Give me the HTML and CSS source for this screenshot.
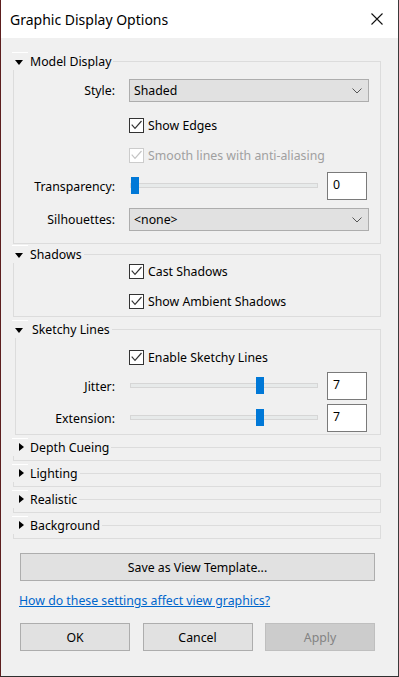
FILE: index.html
```html
<!DOCTYPE html>
<html lang="en">
<head>
    <meta charset="UTF-8">
    <meta name="viewport" content="width=device-width, initial-scale=1.0">
    <title>Graphic Display Options</title>
    <link rel="stylesheet" href="styles.css">
</head>
<body>
    <div class="dialog">
        <div class="titlebar">
            <span class="title">Graphic Display Options</span>
            <svg class="close" width="12" height="12" viewBox="0 0 12 12">
                <path d="M0.5 0.5 L11.5 11.5 M11.5 0.5 L0.5 11.5" stroke="#111" stroke-width="1.1" fill="none"/>
            </svg>
        </div>

        <div class="content">
            <!-- Model Display -->
            <section class="group">
                <div class="group-head">
                    <span class="toggle"><span class="tri-down"></span></span>
                    <span class="group-title">Model Display</span>
                    <span class="group-rule"></span>
                </div>
                <div class="group-body model-body">
                    <div class="row row-style">
                        <span class="lbl">Style:</span>
                        <div class="select">
                            <span>Shaded</span>
                            <svg class="chevron" width="10" height="6" viewBox="0 0 10 6"><path d="M0.5 0.5 L5 5 L9.5 0.5" stroke="#555" fill="none"/></svg>
                        </div>
                    </div>
                    <div class="row row-edges">
                        <span></span>
                        <label class="check">
                            <span class="box"><svg width="13" height="13" viewBox="0 0 13 13"><polyline points="1.7,5.7 5,9.3 11.5,2" stroke="#333" stroke-width="1.2" fill="none"/></svg></span>
                            Show Edges
                        </label>
                    </div>
                    <div class="row row-smooth">
                        <span></span>
                        <label class="check disabled">
                            <span class="box"><svg width="13" height="13" viewBox="0 0 13 13"><polyline points="1.7,5.7 5,9.3 11.5,2" stroke="#c4c4c4" stroke-width="1.2" fill="none"/></svg></span>
                            Smooth lines with anti-aliasing
                        </label>
                    </div>
                    <div class="row row-transp">
                        <span class="lbl">Transparency:</span>
                        <div class="slider-wrap">
                            <div class="slider"><span class="track"></span><span class="thumb" style="left: 2px"></span></div>
                            <div class="textbox">0</div>
                        </div>
                    </div>
                    <div class="row row-silh">
                        <span class="lbl">Silhouettes:</span>
                        <div class="select">
                            <span>&lt;none&gt;</span>
                            <svg class="chevron" width="10" height="6" viewBox="0 0 10 6"><path d="M0.5 0.5 L5 5 L9.5 0.5" stroke="#555" fill="none"/></svg>
                        </div>
                    </div>
                </div>
            </section>

            <!-- Shadows -->
            <section class="group group-shadows">
                <div class="group-head">
                    <span class="toggle"><span class="tri-down"></span></span>
                    <span class="group-title">Shadows</span>
                    <span class="group-rule"></span>
                </div>
                <div class="group-body shadows-body">
                    <div class="row row-cast">
                        <span></span>
                        <label class="check">
                            <span class="box"><svg width="13" height="13" viewBox="0 0 13 13"><polyline points="1.7,5.7 5,9.3 11.5,2" stroke="#333" stroke-width="1.2" fill="none"/></svg></span>
                            Cast Shadows
                        </label>
                    </div>
                    <div class="row row-ambient">
                        <span></span>
                        <label class="check">
                            <span class="box"><svg width="13" height="13" viewBox="0 0 13 13"><polyline points="1.7,5.7 5,9.3 11.5,2" stroke="#333" stroke-width="1.2" fill="none"/></svg></span>
                            Show Ambient Shadows
                        </label>
                    </div>
                </div>
            </section>

            <!-- Sketchy Lines -->
            <section class="group group-sketchy">
                <div class="group-head">
                    <span class="toggle"><span class="tri-down"></span></span>
                    <span class="group-title">Sketchy Lines</span>
                    <span class="group-rule"></span>
                </div>
                <div class="group-body sketchy-body">
                    <div class="row row-enable">
                        <span></span>
                        <label class="check">
                            <span class="box"><svg width="13" height="13" viewBox="0 0 13 13"><polyline points="1.7,5.7 5,9.3 11.5,2" stroke="#333" stroke-width="1.2" fill="none"/></svg></span>
                            Enable Sketchy Lines
                        </label>
                    </div>
                    <div class="row row-jitter">
                        <span class="lbl">Jitter:</span>
                        <div class="slider-wrap">
                            <div class="slider"><span class="track"></span><span class="thumb" style="left: 127px"></span></div>
                            <div class="textbox">7</div>
                        </div>
                    </div>
                    <div class="row row-ext">
                        <span class="lbl">Extension:</span>
                        <div class="slider-wrap">
                            <div class="slider"><span class="track"></span><span class="thumb" style="left: 127px"></span></div>
                            <div class="textbox">7</div>
                        </div>
                    </div>
                </div>
            </section>

            <!-- collapsed groups -->
            <section class="group group-collapsed">
                <div class="group-head">
                    <span class="toggle"><span class="tri-right"></span></span>
                    <span class="group-title">Depth Cueing</span>
                    <span class="group-rule"></span>
                </div>
                <div class="group-body"></div>
            </section>
            <section class="group group-collapsed">
                <div class="group-head">
                    <span class="toggle"><span class="tri-right"></span></span>
                    <span class="group-title">Lighting</span>
                    <span class="group-rule"></span>
                </div>
                <div class="group-body"></div>
            </section>
            <section class="group group-collapsed">
                <div class="group-head">
                    <span class="toggle"><span class="tri-right"></span></span>
                    <span class="group-title">Realistic</span>
                    <span class="group-rule"></span>
                </div>
                <div class="group-body"></div>
            </section>
            <section class="group group-collapsed">
                <div class="group-head">
                    <span class="toggle"><span class="tri-right"></span></span>
                    <span class="group-title">Background</span>
                    <span class="group-rule"></span>
                </div>
                <div class="group-body"></div>
            </section>

            <button class="btn btn-wide">Save as View Template...</button>
            <a class="help-link" href="#">How do these settings affect view graphics?</a>

            <div class="actions">
                <button class="btn">OK</button>
                <button class="btn">Cancel</button>
                <button class="btn btn-disabled">Apply</button>
            </div>
        </div>
    </div>
</body>
</html>
```

FILE: styles.css
```css
body {
    margin: 0;
    padding: 0;
    font-family: "Noto Sans", "Liberation Sans", sans-serif;
    font-size: 12.3px;
    color: #000;
    background-color: #2b2b2b;
}

.dialog {
    width: 399px;
    height: 677px;
    box-sizing: border-box;
    background-color: #f0f0f0;
    border-left: 1px solid #5c1e1e;
    border-right: 1px solid #3a3a3a;
    border-bottom: 1px solid #2f2f2f;
    display: flex;
    flex-direction: column;
}

/* title bar */
.titlebar {
    height: 38px;
    background-color: #fff;
    display: flex;
    align-items: center;
    justify-content: space-between;
    padding: 0 15px 0 9px;
}
.title {
    font-size: 14px;
}

.content {
    padding: 14px 17px 0 11px;
    display: flex;
    flex-direction: column;
}

/* collapsible groups */
.group {
    display: flex;
    flex-direction: column;
}
.group-shadows {
    margin-top: 1px;
}
.group-sketchy,
.group-collapsed {
    margin-top: 3px;
}
.group-head {
    height: 18px;
    display: flex;
    align-items: center;
}
.toggle {
    width: 16px;
    height: 17px;
    border-top: 1px solid #fff;
    position: relative;
}
.tri-down {
    position: absolute;
    left: 3px;
    top: 7px;
    border-left: 4.5px solid transparent;
    border-right: 4.5px solid transparent;
    border-top: 5px solid #000;
}
.tri-right {
    position: absolute;
    left: 7px;
    top: 4px;
    border-top: 4px solid transparent;
    border-bottom: 4px solid transparent;
    border-left: 5px solid #000;
}
.group-title {
    margin-left: 2px;
    padding-right: 2px;
}
.group-sketchy .group-title {
    margin-left: 4px;
}
.group-rule {
    flex: 1;
    align-self: stretch;
    margin-top: 9px;
    border-top: 1px solid #dcdcdc;
    border-right: 1px solid #dcdcdc;
}
.group-body {
    margin-left: 1px;
    height: 4px;
    border: 1px solid #dcdcdc;
    border-top: none;
}
.group-sketchy .group-body {
    margin-left: 3px;
}

.model-body,
.shadows-body,
.sketchy-body {
    height: auto;
    display: flex;
    flex-direction: column;
}
.model-body {
    padding: 9px 0 12px 0;
}
.shadows-body {
    padding: 1px 0 7px 0;
}
.sketchy-body {
    padding: 12px 0 2px 0;
}

.row {
    display: grid;
    grid-template-columns: 101px 240px;
    column-gap: 14px;
    align-items: center;
}
.group-sketchy .row {
    grid-template-columns: 99px 240px;
}
.row-edges { margin-top: 16px; }
.row-smooth { margin-top: 15px; }
.row-transp { margin-top: 9px; }
.row-silh { margin-top: 8px; }
.row-ambient { margin-top: 15px; }
.row-jitter { margin-top: 7px; }
.row-ext { margin-top: 4px; }

.lbl {
    text-align: right;
}

/* dropdown */
.select {
    height: 23px;
    box-sizing: border-box;
    background-color: #e1e1e1;
    border: 1px solid #adadad;
    display: flex;
    align-items: center;
    justify-content: space-between;
    padding: 0 6px 0 4px;
}

/* checkbox */
.check {
    display: flex;
    align-items: center;
    height: 15px;
}
.box {
    width: 15px;
    height: 15px;
    box-sizing: border-box;
    border: 1px solid #333;
    background-color: #fff;
    margin-right: 4px;
    display: flex;
}
.disabled {
    color: #a0a0a0;
}
.disabled .box {
    border-color: #cccccc;
}

/* slider + value box */
.slider-wrap {
    display: flex;
    align-items: center;
    gap: 8px;
}
.slider {
    width: 190px;
    height: 18px;
    position: relative;
}
.track {
    position: absolute;
    left: 1px;
    right: 1px;
    top: 6px;
    height: 3px;
    background-color: #e7eaea;
    border: 1px solid #d6d6d6;
}
.thumb {
    position: absolute;
    top: 0;
    width: 8px;
    height: 17px;
    background-color: #0078d7;
}
.textbox {
    width: 40px;
    height: 28px;
    box-sizing: border-box;
    background-color: #fff;
    border: 1px solid #7a7a7a;
    padding: 3px 5px;
}

/* buttons */
.btn {
    font-family: inherit;
    font-size: 12.3px;
    color: #000;
    height: 28px;
    box-sizing: border-box;
    background-color: #e1e1e1;
    border: 1px solid #adadad;
    padding: 0;
}
.btn-wide {
    margin: 14px 0 0 8px;
    width: 355px;
}
.help-link {
    margin: 12px 0 0 7px;
    line-height: 16px;
    color: #0066cc;
}
.actions {
    margin: 14px 0 0 8px;
    width: 355px;
    display: flex;
    justify-content: space-between;
}
.actions .btn {
    width: 110px;
}
.btn-disabled {
    background-color: #cccccc;
    border-color: #bfbfbf;
    color: #838383;
}
```
